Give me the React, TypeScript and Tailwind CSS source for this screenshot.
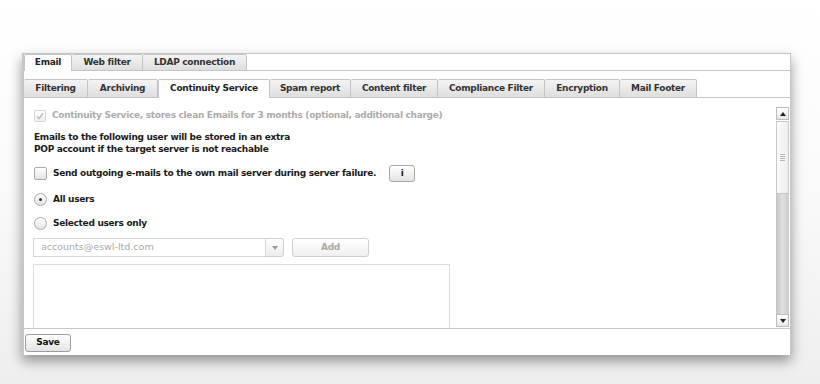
import { ReactNode } from "react";

type TabDef = { label: string; w: number; active?: boolean };

const tabsTopo: TabDef[] = [
  { label: "Email", w: 48, active: true },
  { label: "Web filter", w: 71 },
  { label: "LDAP connection", w: 104 },
];

const tabsModulo: TabDef[] = [
  { label: "Filtering", w: 64 },
  { label: "Archiving", w: 70 },
  { label: "Continuity Service", w: 112, active: true },
  { label: "Spam report", w: 81 },
  { label: "Content filter", w: 87 },
  { label: "Compliance Filter", w: 107 },
  { label: "Encryption", w: 75 },
  { label: "Mail Footer", w: 77 },
];

function Aba({ tab, altura }: { tab: TabDef; altura: string }) {
  return (
    <div
      style={{ width: tab.w }}
      className={
        tab.active
          ? `${altura} flex shrink-0 items-center justify-center rounded-t-[2px] border border-b-0 border-[#c4c4c4] bg-white text-[#222]`
          : `${altura} flex shrink-0 items-center justify-center rounded-t-[2px] border border-l-0 border-[#c4c4c4] bg-gradient-to-b from-[#f4f4f4] to-[#dedede] text-[#333]`
      }
    >
      {tab.label}
    </div>
  );
}

function Checkbox({ checked, disabled }: { checked?: boolean; disabled?: boolean }) {
  return (
    <span
      className={
        disabled
          ? "relative flex h-[12px] w-[12px] shrink-0 items-center justify-center rounded-[2px] border border-[#d6d6d6] bg-gradient-to-b from-white to-[#efefef]"
          : "relative flex h-[13px] w-[13px] shrink-0 items-center justify-center rounded-[2px] border border-[#a9a9a9] bg-gradient-to-b from-white to-[#e4e4e4]"
      }
    >
      {checked && (
        <svg viewBox="0 0 12 12" className="h-[10px] w-[10px]">
          <path d="M2.5 6.5 L5 9 L9.5 2.5" fill="none" stroke="#b5b5b5" strokeWidth="1.5" />
        </svg>
      )}
    </span>
  );
}

function Radio({ checked }: { checked?: boolean }) {
  return (
    <span className="flex h-[13px] w-[13px] shrink-0 items-center justify-center rounded-full border border-[#a9a9a9] bg-gradient-to-b from-white to-[#e2e2e2]">
      {checked && <span className="h-[3px] w-[3px] rounded-full bg-[#333]" />}
    </span>
  );
}

function Linha({ children, className = "" }: { children: ReactNode; className?: string }) {
  return <div className={`flex items-center gap-[6px] ${className}`}>{children}</div>;
}

function Scrollbar() {
  return (
    <div className="mr-[1px] mt-[9px] flex h-[220px] w-[13px] shrink-0 flex-col">
      <div className="flex h-[13px] items-center justify-center border border-[#bdbdbd] bg-gradient-to-b from-white to-[#e6e6e6]">
        <span className="h-0 w-0 border-x-[3px] border-b-[4px] border-x-transparent border-b-[#222]" />
      </div>
      <div className="mt-[1px] flex h-[73px] flex-col items-center justify-center gap-[1px] border border-[#c8c8c8] bg-gradient-to-r from-[#fbfbfb] to-[#eeeeee]">
        <span className="h-[1px] w-[5px] bg-[#b8b8b8]" />
        <span className="h-[1px] w-[5px] bg-[#b8b8b8]" />
        <span className="h-[1px] w-[5px] bg-[#b8b8b8]" />
        <span className="h-[1px] w-[5px] bg-[#b8b8b8]" />
      </div>
      <div className="flex-1 bg-gradient-to-r from-[#c4c4c4] via-[#e0e0e0] to-[#cbcbcb]" />
      <div className="flex h-[13px] items-center justify-center border border-[#bdbdbd] bg-gradient-to-b from-white to-[#e6e6e6]">
        <span className="h-0 w-0 border-x-[3px] border-t-[4px] border-x-transparent border-t-[#222]" />
      </div>
    </div>
  );
}

export default function App() {
  return (
    <div
      className="h-[384px] w-[820px] overflow-hidden bg-gradient-to-b from-white via-[#fafafa] to-[#eeeeee] pl-[22px] pt-[53px] text-[9px] font-bold tracking-[-0.3px]"
      style={{ fontFamily: '"DejaVu Sans", Verdana, sans-serif' }}
    >
      <div className="flex h-[302px] w-[769px] flex-col border-l-2 border-t border-r border-[#c6c6c6] bg-white shadow-[0_6px_12px_rgba(0,0,0,0.4)]">
        {/* abas principais */}
        <div className="flex h-[17px] items-end">
          {tabsTopo.map((t) => (
            <Aba key={t.label} tab={t} altura="h-[17px]" />
          ))}
          <div className="h-full flex-1 border-b border-[#c4c4c4]" />
        </div>
        <div className="h-[8px]" />
        {/* abas de módulo */}
        <div className="flex h-[19px] items-end">
          {tabsModulo.map((t) => (
            <Aba key={t.label} tab={t} altura="h-[19px]" />
          ))}
          <div className="h-full flex-1 border-b border-[#c4c4c4]" />
        </div>

        {/* conteúdo */}
        <div className="flex h-[230px] overflow-hidden">
          <div className="flex-1 overflow-hidden pl-[10px] pt-[12px]">
            <Linha className="h-[12px] text-[#ababab]">
              <Checkbox checked disabled />
              <span>Continuity Service, stores clean Emails for 3 months (optional, additional charge)</span>
            </Linha>
            <p className="mt-[9px] leading-[12px] text-[#1a1a1a]">
              Emails to the following user will be stored in an extra
              <br />
              POP account if the target server is not reachable
            </p>
            <Linha className="mt-[10px] h-[17px] text-[#1a1a1a]">
              <Checkbox />
              <span>Send outgoing e-mails to the own mail server during server failure.</span>
              <button className="ml-[7px] flex h-[17px] w-[26px] items-center justify-center rounded-[3px] border border-[#a5a5a5] bg-gradient-to-b from-white to-[#e4e4e4] text-[#222]">
                i
              </button>
            </Linha>
            <Linha className="mt-[11px] h-[13px] text-[#1a1a1a]">
              <Radio checked />
              <span>All users</span>
            </Linha>
            <Linha className="mt-[11px] h-[13px] text-[#1a1a1a]">
              <Radio />
              <span>Selected users only</span>
            </Linha>
            <div className="-ml-[1px] mt-[8px] flex h-[19px] items-center">
              <div className="flex h-full w-[233px] items-center border border-[#d8d8d8] bg-white pl-[7px] text-[9.5px] font-normal tracking-normal text-[#a9a9a9]">
                accounts@eswl-ltd.com
              </div>
              <div className="flex h-full w-[18px] items-center justify-center rounded-r-[3px] border border-l-0 border-[#d0d0d0] bg-gradient-to-b from-white to-[#ececec]">
                <span className="h-0 w-0 border-x-[3px] border-t-[4px] border-x-transparent border-t-[#999]" />
              </div>
              <button className="ml-[8px] flex h-full w-[77px] items-center justify-center rounded-[3px] border border-[#cfcfcf] bg-gradient-to-b from-white to-[#efefef] text-[#a9a9a9]">
                Add
              </button>
            </div>
            <div className="-ml-[1px] mt-[7px] h-[80px] w-[417px] border border-[#dddddd] bg-white" />
          </div>
          <Scrollbar />
        </div>

        {/* rodapé */}
        <div className="flex flex-1 items-start border-t border-[#c8c8c8] bg-white pt-[5px]">
          <button className="ml-[1px] flex h-[18px] w-[46px] items-center justify-center rounded-[3px] border border-[#9c9c9c] bg-gradient-to-b from-white to-[#e2e2e2] text-[#111]">
            Save
          </button>
        </div>
      </div>
    </div>
  );
}
